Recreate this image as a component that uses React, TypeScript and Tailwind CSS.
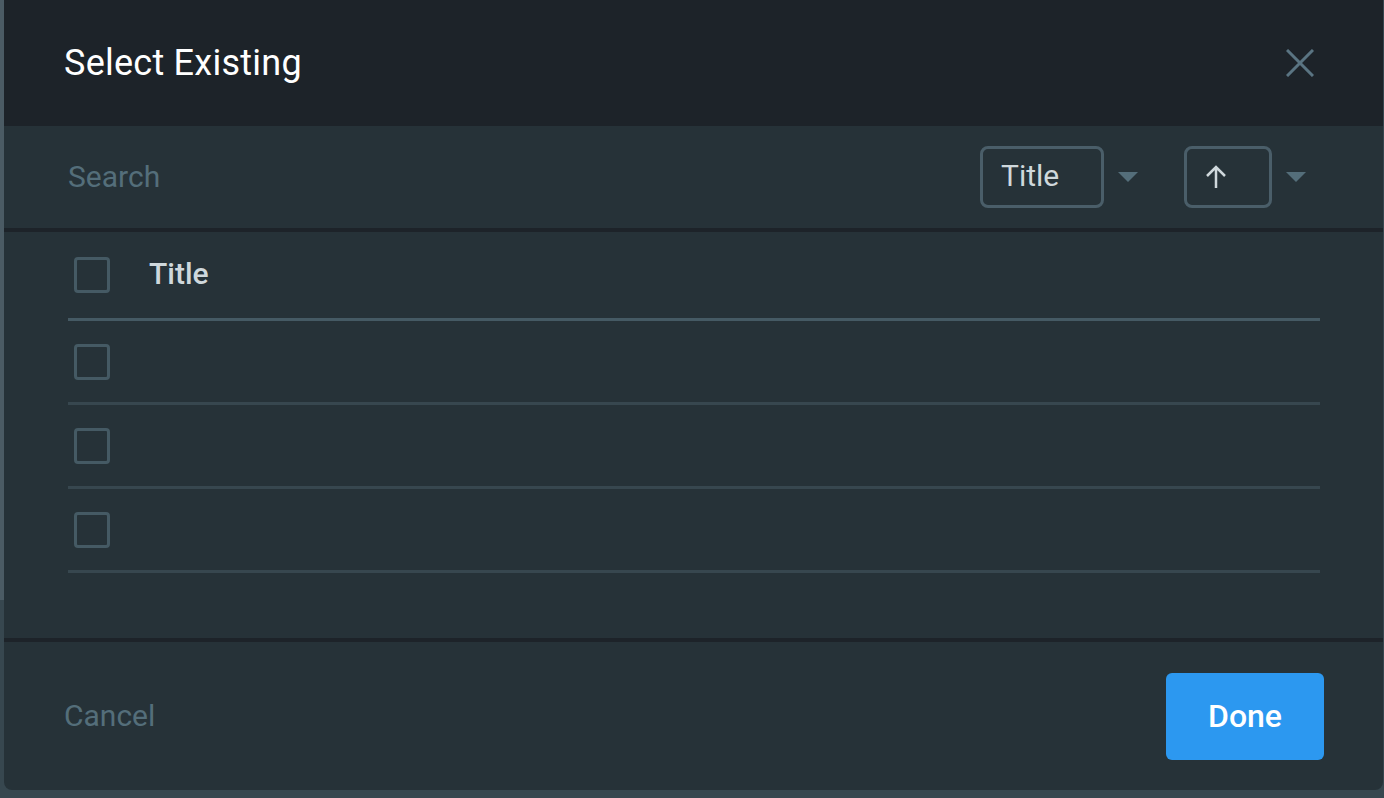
import React from "react";

const font = { fontFamily: "Roboto, 'Noto Sans', sans-serif" };

function Checkbox() {
  return <div className="w-[36px] h-[36px] rounded-[4px] border-[3px] border-[#455a64] ml-[6px] shrink-0" />;
}

function Caret() {
  return (
    <svg width="20" height="10" viewBox="0 0 20 10" className="shrink-0">
      <path d="M0 0 L20 0 L10 10 Z" fill="#546e7a" />
    </svg>
  );
}

export default function App() {
  return (
    <div className="w-[1384px] h-[798px] bg-[#37474f] flex overflow-hidden" style={font}>
      <div className="w-[4px] flex flex-col shrink-0">
        <div className="h-[600px] bg-[#4b5b64]" />
      </div>
      <div className="w-[1379px] h-[790px] bg-[#263238] rounded-b-[8px] flex flex-col overflow-hidden">
        {/* Header */}
        <div className="h-[126px] bg-[#1d2329] flex items-center justify-between pl-[60px] pr-[69px] shrink-0">
          <div className="text-[36px] text-white leading-none tracking-[0.25px]">Select Existing</div>
          <svg width="28" height="28" viewBox="0 0 28 28">
            <path d="M1 1 L27 27 M27 1 L1 27" stroke="#5a7482" strokeWidth="3" />
          </svg>
        </div>
        {/* Search bar */}
        <div className="h-[106px] border-b-[4px] border-[#1d2329] flex items-center pl-[64px] pr-[77px] pb-[1px] shrink-0">
          <div className="text-[30px] text-[#546e7a] leading-none flex-1">Search</div>
          <div className="flex items-center">
            <div className="w-[124px] h-[62px] rounded-[8px] border-[3px] border-[#4a5e69] flex items-center pl-[18px] pb-[2px] text-[30px] text-[#cfd8dc] leading-none">
              Title
            </div>
            <div className="ml-[14px]">
              <Caret />
            </div>
            <div className="ml-[46px] w-[88px] h-[62px] rounded-[8px] border-[3px] border-[#4a5e69] flex items-center pl-[18px]">
              <svg width="22" height="24" viewBox="0 0 22 24">
                <path d="M11 23 L11 2 M2 11 L11 2 L20 11" stroke="#cfd8dc" strokeWidth="2.5" fill="none" />
              </svg>
            </div>
            <div className="ml-[14px]">
              <Caret />
            </div>
          </div>
        </div>
        {/* Table */}
        <div className="pl-[64px] pr-[63px] shrink-0">
          <div className="h-[89px] border-b-[3px] border-[#455a64] flex items-center">
            <Checkbox />
            <div className="ml-[39px] mb-[2px] text-[30px] font-medium text-[#cfd8dc] leading-none">Title</div>
          </div>
          {[0, 1, 2].map((i) => (
            <div key={i} className="h-[84px] border-b-[3px] border-[#37474f] flex items-center">
              <Checkbox />
            </div>
          ))}
        </div>
        <div className="h-[69px] border-b-[4px] border-[#1d2329] shrink-0" />
        {/* Footer */}
        <div className="flex-1 flex items-center justify-between pl-[60px] pr-[59px]">
          <div className="text-[30px] text-[#546e7a] leading-none">Cancel</div>
          <div className="w-[158px] h-[87px] rounded-[6px] bg-[#2c98f0] flex items-center justify-center text-[32px] font-medium text-white leading-none">
            Done
          </div>
        </div>
      </div>
    </div>
  );
}
